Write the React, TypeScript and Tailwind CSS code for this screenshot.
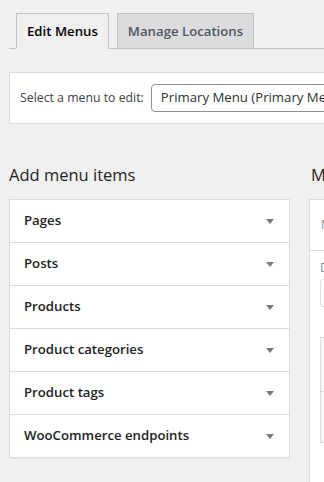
const menuSections = [
  'Pages',
  'Posts',
  'Products',
  'Product categories',
  'Product tags',
  'WooCommerce endpoints',
]

const Arrow = () => (
  <svg width="8" height="5" viewBox="0 0 8 5" className="shrink-0">
    <path d="M0 0h8L4 5z" fill="#787c82" />
  </svg>
)

const Tabs = () => {
  return (
    <div className="ml-[9px] mt-[13px] flex w-[400px] items-end gap-2 border-b border-[#c3c4c7] pl-[7px]">
      <div className="-mb-px flex h-[36px] items-center border border-[#c3c4c7] border-b-[#f0f0f1] bg-[#f0f0f1] px-[10px] pt-[2px] text-[13.2px] font-semibold text-black">
        Edit Menus
      </div>
      <div className="flex h-[35px] items-center border border-b-0 border-[#c3c4c7] bg-[#dcdcde] px-[10px] pt-[2px] text-[13.2px] font-semibold text-[#50575e]">
        Manage Locations
      </div>
    </div>
  )
}

const MenuPicker = () => {
  return (
    <div className="ml-[9px] mt-[23px] flex h-[52px] w-[400px] items-center border border-[#dcdcde] bg-white pl-[10px]">
      <span className="text-[12.3px] text-[#3c434a]">Select a menu to edit:</span>
      <div className="ml-[7px] flex h-[28px] w-[220px] items-center whitespace-nowrap rounded-[4px] border border-[#8c8f94] px-[9px] text-[13.2px] text-[#2c3338]">
        Primary Menu (Primary Menu)
      </div>
    </div>
  )
}

const AddMenuItems = () => {
  return (
    <div className="w-[281px] shrink-0">
      <h2 className="h-[23px] text-[16.5px] leading-[23px] text-[#1d2327]">Add menu items</h2>
      <div className="mt-[13px] border border-[#dcdcde] bg-white shadow-[0_1px_1px_rgba(0,0,0,0.04)]">
        {menuSections.map((name, i) => (
          <div
            key={name}
            className={`flex h-[42px] items-center justify-between pl-[14px] pr-[15px] ${i < menuSections.length - 1 ? 'box-content border-b border-[#dcdcde]' : ''}`}
          >
            <span className="text-[13.2px] font-semibold text-[#1d2327]">{name}</span>
            <Arrow />
          </div>
        ))}
      </div>
    </div>
  )
}

const MenuStructure = () => {
  return (
    <div className="ml-[19px] w-[300px] shrink-0">
      <h2 className="h-[23px] whitespace-nowrap pl-[2px] text-[16.5px] leading-[23px] text-[#1d2327]">Menu structure</h2>
      <div className="mt-[13px] h-[300px] border border-[#dcdcde] bg-white">
        <div className="flex h-[51px] items-center border-b border-[#dcdcde] pl-[11px]">
          <span className="whitespace-nowrap text-[12.3px] text-[#8c8f94]">Menu Name</span>
        </div>
        <div className="pl-[10px] pt-[8px]">
          <p className="whitespace-nowrap text-[12.3px] leading-[18px] text-[#8c8f94]">Drag the items into the order you prefer.</p>
          <div className="mt-[2px] h-[28px] w-[200px] rounded-[3px] border border-[#dcdcde]"></div>
          <div className="mt-[30px] h-[55px] w-[200px] border border-[#dcdcde] bg-[#f6f7f7]"></div>
          <div className="h-[51px] w-[200px] border border-t-0 border-[#dcdcde] bg-[#f6f7f7]"></div>
        </div>
      </div>
    </div>
  )
}

export default function App() {
  return (
    <div className="h-[482px] w-[324px] overflow-hidden bg-[#f0f0f1] font-['Open_Sans',sans-serif]">
      <Tabs />
      <MenuPicker />
      <div className="ml-[9px] mt-[39px] flex">
        <AddMenuItems />
        <MenuStructure />
      </div>
    </div>
  )
}
